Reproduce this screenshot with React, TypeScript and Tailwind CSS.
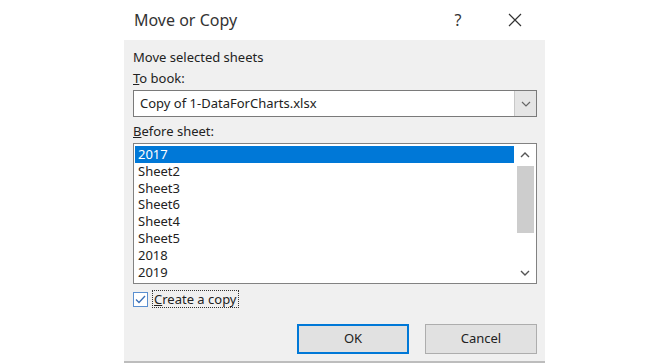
import React from "react";

const rows = ["2017", "Sheet2", "Sheet3", "Sheet6", "Sheet4", "Sheet5", "2018", "2019"];

export default function App() {
  return (
    <div className="w-[670px] h-[363px] bg-white flex justify-center" style={{ fontFamily: '"Noto Sans", "Open Sans", sans-serif' }}>
      <div className="w-[421px] ml-[-1px] flex flex-col">
        <div className="h-[40px] flex items-center pl-[10px] text-[#333] text-[16px]">
          <span className="flex-1 mt-[-1px]">Move or Copy</span>
          <span className="w-[20px] text-center mr-[40px] text-[16px]">?</span>
          <svg width="14" height="14" viewBox="0 0 14 14" className="mr-[23px]">
            <path d="M1 1 L13 13 M13 1 L1 13" stroke="#333" strokeWidth="1.2" />
          </svg>
        </div>
        <div className="flex-1 bg-[#f0f0f0] border-b-2 border-[#bdbdbd] pl-[9px] pr-[8px] text-[13px] text-[#222] flex flex-col">
          <div className="mt-[7px] h-[20px] leading-[20px]">Move selected sheets</div>
          <div className="mt-[1px] h-[20px] leading-[20px]"><span className="underline">T</span>o book:</div>
          <div className="mt-[2px] h-[27px] border border-[#7a7a7a] bg-white flex">
            <div className="flex-1 pl-[6px] leading-[25px]">Copy of 1-DataForCharts.xlsx</div>
            <div className="w-[22px] bg-[#e5e5e5] border-l border-[#c8c8c8] flex items-center justify-center">
              <svg width="10" height="6" viewBox="0 0 10 6"><path d="M1 1 L5 5 L9 1" stroke="#666" strokeWidth="1.2" fill="none" /></svg>
            </div>
          </div>
          <div className="mt-[4px] h-[20px] leading-[20px]"><span className="underline">B</span>efore sheet:</div>
          <div className="mt-[2px] h-[141px] border border-[#828282] bg-white flex">
            <div className="flex-1 pt-[2px] pl-[1px]">
              {rows.map((r, i) => (
                <div key={r} className={"h-[16.8px] leading-[16.8px] pl-[3px] " + (i === 0 ? "bg-[#0078d7] text-white" : "")}>{r}</div>
              ))}
            </div>
            <div className="w-[22px] flex flex-col items-center">
              <div className="h-[22px] flex items-center justify-center">
                <svg width="10" height="6" viewBox="0 0 10 6"><path d="M1 5 L5 1 L9 5" stroke="#555" strokeWidth="1.4" fill="none" /></svg>
              </div>
              <div className="w-[17px] h-[67px] bg-[#cdcdcd]" />
              <div className="flex-1" />
              <div className="h-[20px] flex items-center justify-center">
                <svg width="10" height="6" viewBox="0 0 10 6"><path d="M1 1 L5 5 L9 1" stroke="#555" strokeWidth="1.4" fill="none" /></svg>
              </div>
            </div>
          </div>
          <div className="mt-[6px] flex items-center">
            <div className="w-[15px] h-[15px] border border-[#5a8fd0] bg-white flex items-center justify-center">
              <svg width="11" height="9" viewBox="0 0 11 9"><path d="M1 4.5 L4 7.5 L10 1" stroke="#3b6fb6" strokeWidth="1.3" fill="none" /></svg>
            </div>
            <div className="ml-[4px] border border-dotted border-[#333] px-[1px] h-[18px] leading-[16px]"><span className="underline">C</span>reate a copy</div>
          </div>
          <div className="mt-[16px] flex justify-end gap-[16px]">
            <div className="w-[112px] h-[30px] border-2 border-[#0078d7] bg-[#e1e1e1] flex items-center justify-center">OK</div>
            <div className="w-[112px] h-[30px] border border-[#adadad] bg-[#e1e1e1] flex items-center justify-center">Cancel</div>
          </div>
        </div>
      </div>
    </div>
  );
}
